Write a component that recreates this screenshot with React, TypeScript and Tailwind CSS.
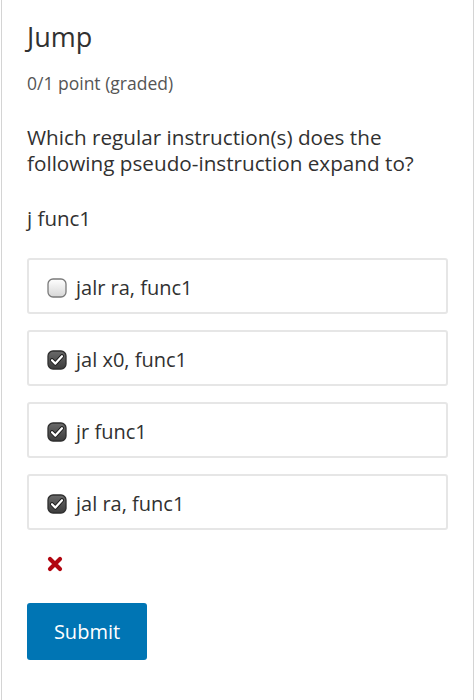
import React from 'react';

interface Choice {
  label: string;
  checked: boolean;
}

const choices: Choice[] = [
  { label: 'jalr ra, func1', checked: false },
  { label: 'jal x0, func1', checked: true },
  { label: 'jr func1', checked: true },
  { label: 'jal ra, func1', checked: true },
];

function CheckBox({ checked }: { checked: boolean }) {
  if (!checked) {
    return (
      <svg width="20" height="20" viewBox="0 0 20 20" className="shrink-0">
        <defs>
          <linearGradient id="ub" x1="0" y1="0" x2="0" y2="1">
            <stop offset="0" stopColor="#ffffff" />
            <stop offset="1" stopColor="#d6d6d6" />
          </linearGradient>
        </defs>
        <rect x="1" y="1" width="18" height="18" rx="5" fill="url(#ub)" stroke="#7a7a7a" strokeWidth="1.3" />
      </svg>
    );
  }
  return (
    <svg width="20" height="20" viewBox="0 0 20 20" className="shrink-0">
      <defs>
        <linearGradient id="cb" x1="0" y1="0" x2="0" y2="1">
          <stop offset="0" stopColor="#6a6a6a" />
          <stop offset="1" stopColor="#3c3c3c" />
        </linearGradient>
      </defs>
      <rect x="1" y="1" width="18" height="18" rx="5" fill="url(#cb)" stroke="#2e2e2e" strokeWidth="1.3" />
      <path d="M5 10.2 L8.4 13.6 L15 6.2" fill="none" stroke="#1a1a1a" strokeWidth="4" strokeLinecap="round" strokeLinejoin="round" />
      <path d="M5 10.2 L8.4 13.6 L15 6.2" fill="none" stroke="#ffffff" strokeWidth="2.2" strokeLinecap="round" strokeLinejoin="round" />
    </svg>
  );
}

export default function App() {
  return (
    <div className="min-h-[700px] bg-white pl-[1px]" style={{ fontFamily: '"Open Sans", "Liberation Sans", sans-serif' }}>
      <div className="w-[473px] min-h-[700px] border-x border-[#d4d4d4] pl-[25px] pr-[25px] pt-[21px] text-[#313131]">
        <h2 className="text-[27px] leading-[32px] font-normal">Jump</h2>
        <div className="mt-[18px] text-[17.5px] leading-[24px] text-[#555555]">0/1 point (graded)</div>

        <p className="mt-[29px] text-[20.7px] leading-[26px]">
          Which regular instruction(s) does the
          <br />
          following pseudo-instruction expand to?
        </p>
        <p className="mt-[29px] text-[20.5px] leading-[26px]">j func1</p>

        <div className="mt-[27px] flex flex-col gap-[16px]">
          {choices.map((c) => (
            <label
              key={c.label}
              className="flex h-[56px] items-center gap-[9px] rounded-[3px] border-2 border-[#e6e6e6] pl-[18px] pt-[3px]"
            >
              <CheckBox checked={c.checked} />
              <span className="text-[20px] leading-[25px]">{c.label}</span>
            </label>
          ))}
        </div>

        <div className="mt-[26px] pl-[20px]">
          <svg width="16" height="16" viewBox="0 0 16 16">
            <path d="M3 3 L13 13 M13 3 L3 13" stroke="#b20610" strokeWidth="4.2" strokeLinecap="round" />
          </svg>
        </div>

        <button className="mt-[31px] flex h-[57px] w-[120px] items-center justify-center rounded-[3px] bg-[#0075b4] text-[20px] text-white">
          Submit
        </button>
      </div>
    </div>
  );
}
